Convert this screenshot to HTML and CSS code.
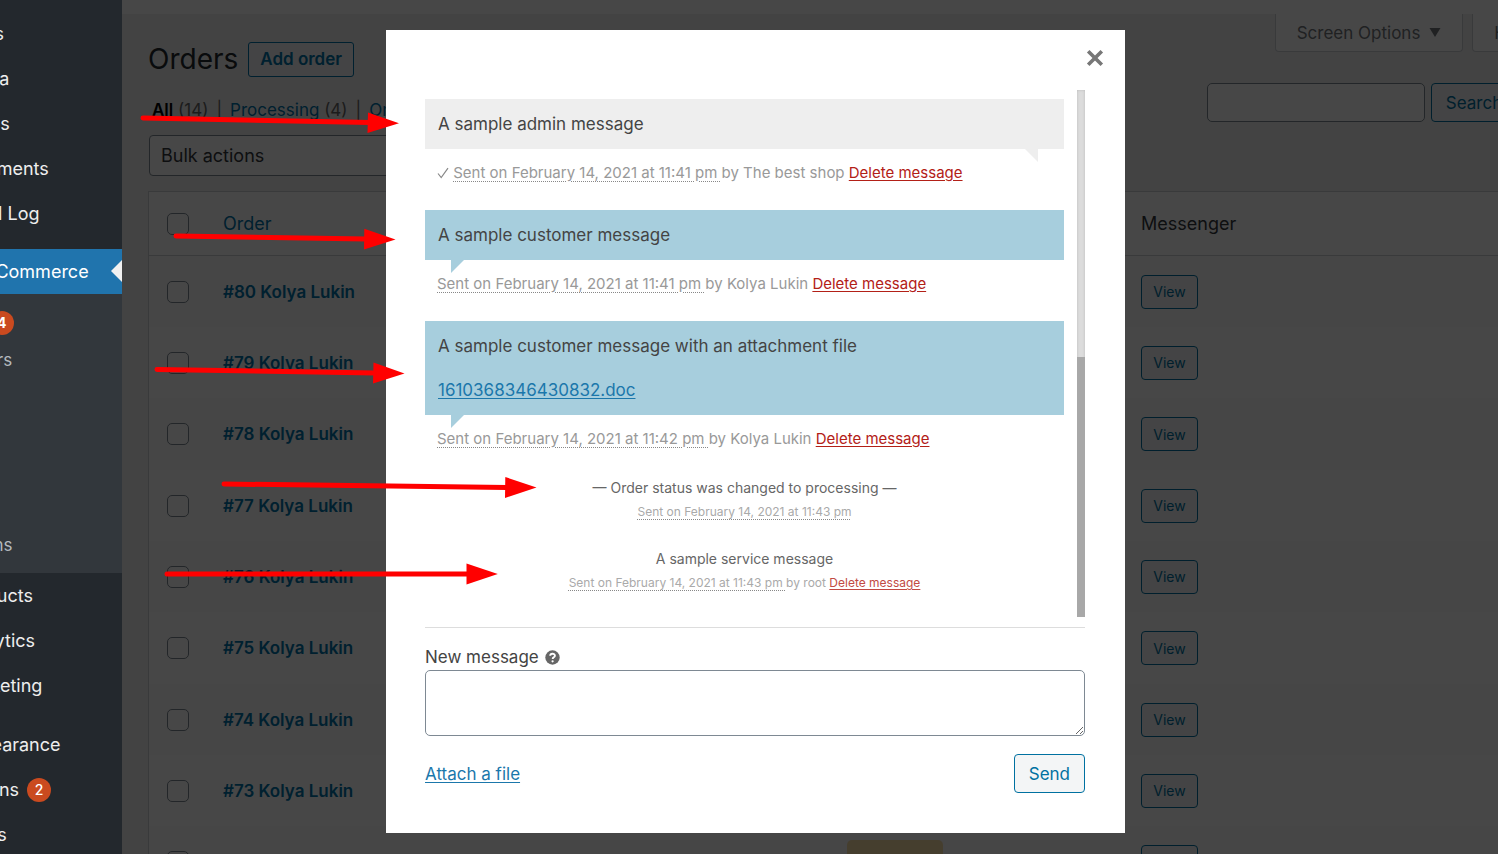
FILE: index.html
```html
<!DOCTYPE html>
<html lang="en">
<head>
<meta charset="utf-8">
<title>Orders</title>
<link rel="stylesheet" href="styles.css">
</head>
<body>
<div class="admin">
  <nav class="sidebar" aria-label="Admin menu">
    <ul class="menu">
      <li><a href="#">Posts</a></li>
      <li><a href="#">Media</a></li>
      <li><a href="#">Pages</a></li>
      <li><a href="#">Comments</a></li>
      <li><a href="#">Email Log</a></li>
      <li class="menu-current"><a href="#">WooCommerce</a></li>
    </ul>
    <ul class="submenu">
      <li><a href="#">Orders <span class="count count-bold">4</span></a></li>
      <li><a href="#">Customers</a></li>
      <li class="submenu-last"><a href="#">Extensions</a></li>
    </ul>
    <ul class="menu menu-lower">
      <li><a href="#">Products</a></li>
      <li><a href="#">Analytics</a></li>
      <li><a href="#">Marketing</a></li>
      <li class="menu-spaced"><a href="#">Appearance</a></li>
      <li><a href="#">Plugins <span class="count">2</span></a></li>
      <li><a href="#">Users</a></li>
    </ul>
  </nav>

  <main class="main">
    <div class="topbar"></div>
    <div class="content">
      <header class="page-head">
        <div class="title-row">
          <h1>Orders</h1>
          <a class="add-order" href="#">Add order</a>
        </div>
        <div class="tabs">
          <button class="tab" type="button">Screen Options <svg width="12" height="9" viewBox="0 0 12 9" aria-hidden="true"><path d="M0.5 0h11L6 9z" fill="currentColor"/></svg></button>
          <button class="tab" type="button">Help <svg width="12" height="9" viewBox="0 0 12 9" aria-hidden="true"><path d="M0.5 0h11L6 9z" fill="currentColor"/></svg></button>
        </div>
      </header>
      <div class="filter-row">
        <div class="filters">
          <a class="filter-current" href="#">All</a> <span>(14)</span><i>|</i><a href="#">Processing</a> <span>(4)</span><i>|</i><a href="#">On hold</a>
        </div>
        <form class="search">
          <input type="search" aria-label="Search orders">
          <button class="btn" type="button">Search orders</button>
        </form>
      </div>
      <select class="bulk" aria-label="Bulk actions"><option>Bulk actions</option></select>
      <table class="orders">
        <thead>
          <tr><th class="col-check"><input type="checkbox" aria-label="Select all"></th><th class="col-order"><a href="#">Order</a></th><th class="col-status"></th><th>Messenger</th></tr>
        </thead>
        <tbody>
          <tr><td><input type="checkbox" aria-label="Select order 80"></td><td><a href="#">#80 Kolya Lukin</a></td><td></td><td><button class="btn btn-small" type="button">View</button></td></tr>
          <tr><td><input type="checkbox" aria-label="Select order 79"></td><td><a href="#">#79 Kolya Lukin</a></td><td></td><td><button class="btn btn-small" type="button">View</button></td></tr>
          <tr><td><input type="checkbox" aria-label="Select order 78"></td><td><a href="#">#78 Kolya Lukin</a></td><td></td><td><button class="btn btn-small" type="button">View</button></td></tr>
          <tr><td><input type="checkbox" aria-label="Select order 77"></td><td><a href="#">#77 Kolya Lukin</a></td><td></td><td><button class="btn btn-small" type="button">View</button></td></tr>
          <tr><td><input type="checkbox" aria-label="Select order 76"></td><td><a href="#">#76 Kolya Lukin</a></td><td></td><td><button class="btn btn-small" type="button">View</button></td></tr>
          <tr><td><input type="checkbox" aria-label="Select order 75"></td><td><a href="#">#75 Kolya Lukin</a></td><td></td><td><button class="btn btn-small" type="button">View</button></td></tr>
          <tr><td><input type="checkbox" aria-label="Select order 74"></td><td><a href="#">#74 Kolya Lukin</a></td><td></td><td><button class="btn btn-small" type="button">View</button></td></tr>
          <tr><td><input type="checkbox" aria-label="Select order 73"></td><td><a href="#">#73 Kolya Lukin</a></td><td></td><td><button class="btn btn-small" type="button">View</button></td></tr>
          <tr><td><input type="checkbox" aria-label="Select order 72"></td><td></td><td><span class="status"></span></td><td><button class="btn btn-small" type="button" aria-label="View"></button></td></tr>
        </tbody>
      </table>
    </div>
    <div class="backdrop"></div>
  </main>
</div>

<div class="modal-layer">
  <section class="modal" role="dialog" aria-label="Order messages">
    <button class="close" type="button" aria-label="Close"><svg width="18" height="18" viewBox="0 0 18 18" aria-hidden="true"><path d="M2.200 2.200l13.600 13.600M15.800 2.200L2.200 15.800" stroke="#777" stroke-width="3.600"/></svg></button>
    <div class="thread">
      <div class="messages">
        <article class="message">
          <div class="bubble bubble-admin"><p>A sample admin message</p></div>
          <p class="meta"><svg class="check" width="12" height="12" viewBox="0 0 12 12" aria-hidden="true"><path d="M1 6.500l3.200 4L11 1.200" fill="none" stroke="#888" stroke-width="1.200"/></svg> <abbr>Sent on February 14, 2021 at 11:41 pm </abbr>by The best shop <a href="#">Delete message</a></p>
        </article>
        <article class="message">
          <div class="bubble bubble-customer"><p>A sample customer message</p></div>
          <p class="meta"><abbr>Sent on February 14, 2021 at 11:41 pm </abbr>by Kolya Lukin <a href="#">Delete message</a></p>
        </article>
        <article class="message">
          <div class="bubble bubble-customer"><p>A sample customer message with an attachment file</p><p><a href="#">1610368346430832.doc</a></p></div>
          <p class="meta"><abbr>Sent on February 14, 2021 at 11:42 pm </abbr>by Kolya Lukin <a href="#">Delete message</a></p>
        </article>
        <article class="event">
          <p>— Order status was changed to processing —</p>
          <p class="event-meta"><abbr>Sent on February 14, 2021 at 11:43 pm</abbr></p>
        </article>
        <article class="event">
          <p>A sample service message</p>
          <p class="event-meta"><abbr>Sent on February 14, 2021 at 11:43 pm </abbr>by root <a href="#">Delete message</a></p>
        </article>
      </div>
      <div class="track"><div class="thumb"></div></div>
    </div>
    <form class="compose">
      <div class="label-row">
        <label for="new-message">New message</label>
        <svg width="15" height="15" viewBox="0 0 15 15" aria-hidden="true"><circle cx="7.5" cy="7.5" r="7.2" fill="#666"/><path d="M5.2 5.8C5.2 3 9.9 3 9.9 5.7c0 1.6-2.2 1.7-2.2 3.2" fill="none" stroke="#fff" stroke-width="1.9"/><circle cx="7.6" cy="11.3" r="1.15" fill="#fff"/></svg>
      </div>
      <textarea id="new-message"></textarea>
      <div class="actions">
        <a href="#">Attach a file</a>
        <button class="btn btn-send" type="button">Send</button>
      </div>
    </form>
  </section>
</div>

<svg class="arrows" width="1498" height="854" viewBox="0 0 1498 854" aria-hidden="true">
  <g stroke="#f00" stroke-width="5" stroke-linecap="round">
    <path d="M143 118L370 122.600"/>
    <path d="M176 236L366 239"/>
    <path d="M157 369.500L375 373"/>
    <path d="M224 484L507 487.500"/>
    <path d="M167 574H468"/>
  </g>
  <g fill="#f00">
    <path d="M368 112.500L399 123.300 367.500 133z"/>
    <path d="M364.300 228.700L395.500 239.500 364 249.500z"/>
    <path d="M373.500 362.500L404.500 373.500 373 383.500z"/>
    <path d="M505.300 477L536.500 487.600 505 498z"/>
    <path d="M466.500 563.500L497.800 574 466.500 584.500z"/>
  </g>
</svg>
</body>
</html>
```
FILE: styles.css
```css
* { box-sizing: border-box; }

body {
  margin: 0;
  height: 100vh;
  overflow: hidden;
  font-family: Inter, "Liberation Sans", sans-serif;
  font-size: 17px;
  color: #444;
}

h1, p, ul { margin: 0; padding: 0; }
ul { list-style: none; }
button, input, select, textarea { font: inherit; }
a { color: #0073aa; }

.admin { display: flex; height: 100%; overflow: hidden; }

/* Sidebar */
.sidebar {
  flex: 0 0 122px;
  overflow: hidden;
  background: #23282d;
  white-space: nowrap;
  font-size: 18px;
}
.sidebar a {
  display: flex;
  align-items: center;
  height: 100%;
  color: #eee;
  text-decoration: none;
}
.menu { padding-top: 11px; }
.menu-lower { padding-top: 0; }
.menu li { height: 45px; }
.menu a { margin-left: -43px; }
.menu .menu-current {
  position: relative;
  margin-top: 13px;
  background: #2074ad;
}
.menu .menu-current a { color: #fff; }
.menu-current::after {
  content: "";
  position: absolute;
  right: 0;
  top: 11px;
  border: 11px solid transparent;
  border-left-width: 0;
  border-right-color: #f1f1f1;
}
.menu .menu-spaced { margin-top: 14px; }
.submenu {
  height: 279px;
  padding-top: 10px;
  background: #32373c;
  font-size: 17px;
}
.submenu li { height: 37px; }
.submenu a { margin-left: -75px; color: #b4b9be; }
.submenu .submenu-last { margin-top: 148px; }
.count {
  width: 24px;
  margin-left: 8px;
  border-radius: 12px;
  background: #ca4a1f;
  color: #fff;
  font-size: 14px;
  line-height: 24px;
  font-weight: 500;
  text-align: center;
}
.count-bold { font-weight: 700; margin-left: 10px; }

/* Main page */
.main {
  position: relative;
  flex: 1;
  min-width: 0;
  overflow: hidden;
  background: #f1f1f1;
}
.topbar { height: 14px; background: #fff; }
.content { margin: 0 -76px 0 26px; }
.backdrop { position: absolute; inset: 0; background: rgba(0, 0, 0, 0.72); }

.page-head { display: flex; justify-content: space-between; height: 62px; }
.title-row { display: flex; align-items: center; gap: 10px; padding-top: 28px; }
h1 { font-size: 28px; font-weight: 400; line-height: 34px; color: #23282d; }
.add-order {
  padding: 0 11px;
  border: 1px solid #0073aa;
  border-radius: 3px;
  background: #f3f5f6;
  font-weight: 600;
  line-height: 33px;
  text-decoration: none;
}
.tabs { display: flex; align-items: flex-start; gap: 9px; }
.tab {
  height: 38px;
  padding: 1px 21px 0;
  border: 1px solid #ccd0d4;
  border-top: 0;
  border-radius: 0 0 4px 4px;
  background: #fff;
  color: #72777c;
  white-space: nowrap;
}
.tab svg { margin-left: 4px; vertical-align: 2px; }

.filter-row { display: flex; justify-content: space-between; align-items: flex-end; margin-top: 7px; }
.filters { line-height: 24px; padding-left: 4px; color: #666; }
.filters a { text-decoration: none; }
.filters .filter-current { color: #000; font-weight: 600; }
.filters i { margin: 0 8px; font-style: normal; }
.search { display: flex; gap: 6px; }
.search input {
  width: 218px;
  height: 39px;
  border: 1px solid #7e8993;
  border-radius: 5px;
  background: #fff;
}
.btn {
  height: 39px;
  padding: 0 14px;
  border: 1px solid #0071a1;
  border-radius: 4px;
  background: #f3f5f6;
  color: #0071a1;
  white-space: nowrap;
}
.btn-small { width: 57px; height: 34px; padding: 0; font-size: 14px; vertical-align: middle; }
.bulk {
  display: block;
  width: 286px;
  height: 41px;
  margin: 13px 0 0 1px;
  padding: 0 11px;
  appearance: none;
  border: 1px solid #7e8993;
  border-radius: 4px;
  background: #fff;
  color: #32373c;
  font-size: 18px;
}

.orders {
  width: 100%;
  margin-top: 15px;
  border: 1px solid #ccd0d4;
  border-collapse: separate;
  border-spacing: 0;
  table-layout: fixed;
  background: #fff;
}
.orders th, .orders td { padding: 0; text-align: left; vertical-align: middle; }
.orders th { height: 64px; border-bottom: 1px solid #ccd0d4; font-size: 18px; font-weight: 400; color: #32373c; }
.orders td { height: 71px; }
.orders tbody tr:nth-child(3n) td { height: 72px; }
.orders tbody tr:nth-child(odd) { background: #f9f9f9; }
.orders a { color: #0073aa; text-decoration: none; }
.orders td a { font-weight: 600; }
.col-check { width: 74px; }
.col-order { width: 624px; }
.col-status { width: 294px; }
.orders input {
  display: block;
  appearance: none;
  width: 22px;
  height: 22px;
  margin: 0 0 0 18px;
  border: 1px solid #7e8993;
  border-radius: 5px;
  background: #fff;
}
.status { display: block; width: 96px; height: 44px; border-radius: 5px; background: #f8dda7; }

/* Dialog */
.modal-layer {
  position: fixed;
  inset: 0;
  display: flex;
  justify-content: center;
  align-items: flex-start;
  padding: 30px 0 21px 13px;
}
.modal {
  position: relative;
  width: 100%;
  max-width: 739px;
  padding: 60px 40px 40px 39px;
  background: #fff;
}
.close {
  position: absolute;
  top: 19px;
  right: 21px;
  width: 18px;
  height: 18px;
  padding: 0;
  border: 0;
  background: none;
}
.close svg { display: block; }

.thread { display: flex; gap: 13px; height: 527px; }
.messages { flex: 1; padding-top: 9px; line-height: 24px; }
.message { margin-bottom: 25px; }
.bubble {
  position: relative;
  display: grid;
  gap: 20px;
  padding: 13px;
}
.bubble-admin { background: #eee; }
.bubble-customer { background: #a7cedd; }
.bubble::after {
  content: "";
  position: absolute;
  top: 100%;
  width: 13px;
  height: 13px;
  background: inherit;
}
.bubble-admin::after { right: 26px; clip-path: polygon(0 0, 100% 0, 100% 100%); }
.bubble-customer::after { left: 26px; clip-path: polygon(0 0, 100% 0, 0 100%); }
.meta { margin-top: 12px; padding-left: 12px; font-size: 15px; color: #999; }
.meta a, .event-meta a { color: #b32017; text-underline-offset: 2px; }
.check { vertical-align: -1px; }
abbr { text-decoration: underline dotted 1px #888; text-underline-offset: 3px; white-space: pre; }
.event { margin-bottom: 23px; text-align: center; font-size: 14px; color: #666; }
.event-meta { font-size: 12px; color: #aaa; }
.event-meta a { color: #c24a43; }
.track {
  width: 8px;
  padding-top: 267px;
  background: #dcdcdc;
  box-shadow: inset 0 0 3px #bbb;
}
.thumb { height: 100%; background: #a8a8a8; }

.compose { margin-top: 10px; padding-top: 17px; border-top: 1px solid #ddd; }
.label-row { display: flex; align-items: center; gap: 6px; line-height: 25px; }
.compose textarea {
  display: block;
  width: 100%;
  height: 66px;
  border: 1px solid #7e8993;
  border-radius: 5px;
  resize: vertical;
}
.actions { display: flex; justify-content: space-between; align-items: center; margin-top: 18px; }
.bubble a, .actions a { color: #1b77ab; text-underline-offset: 2px; }
.btn-send { height: 39px; }

.arrows { position: absolute; left: 0; top: 0; }
```
